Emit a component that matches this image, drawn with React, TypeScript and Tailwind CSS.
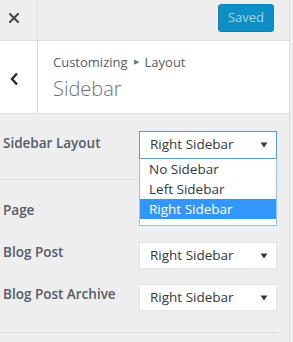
import { useState } from "react";

const OPTIONS = ["No Sidebar", "Left Sidebar", "Right Sidebar"];

const ROWS = [
  { label: "Page", value: "Right Sidebar" },
  { label: "Blog Post", value: "Right Sidebar" },
  { label: "Blog Post Archive", value: "Right Sidebar" },
];

function Caret() {
  return (
    <svg width="8" height="6" viewBox="0 0 8 6" aria-hidden="true" className="shrink-0">
      <path d="M0.5 0.5h7L4 5.5z" fill="#32373c" />
    </svg>
  );
}

function SelectBox({ value, focused }: { value: string; focused?: boolean }) {
  return (
    <div
      className={
        "flex items-center justify-between w-[138px] pl-[10px] pr-[8px] bg-white text-[13.5px] text-[#32373c] " +
        (focused ? "h-[28px] border border-[#5b9dd9]" : "h-[27px] border border-[#e2e4e7]")
      }
    >
      <span className="leading-none">{value}</span>
      <Caret />
    </div>
  );
}

export default function App() {
  const [value] = useState("Right Sidebar");

  return (
    <div
      className="relative w-[293px] h-[342px] overflow-hidden bg-[#eeeeee]"
      style={{ fontFamily: '"Open Sans", "Noto Sans", sans-serif' }}
    >
      <div className="w-[290px] h-full border-r border-[#e0e0e0]">
        {/* top bar */}
        <div className="flex h-[41px] border-b border-[#dddddd]">
          <button
            type="button"
            className="w-[38px] h-[40px] border-r border-[#dddddd] flex items-start justify-start pl-[9px] pt-[13px]"
          >
            <svg width="10" height="10" viewBox="0 0 10 10" aria-hidden="true">
              <path d="M1 1l8 8M9 1l-8 8" stroke="#444" strokeWidth="2" strokeLinecap="square" />
            </svg>
          </button>
          <div className="flex-1 flex justify-end pr-[15px] pt-[4px]">
            <button
              type="button"
              className="w-[56px] h-[28px] rounded-[3px] bg-[#0e8ec4] border border-[#0a83b6] text-[13px] text-[#a3d7ee]"
            >
              Saved
            </button>
          </div>
        </div>

        {/* section title */}
        <div className="flex h-[73px] bg-white border-b border-[#dddddd]">
          <button
            type="button"
            className="w-[38px] h-full border-r border-[#dddddd] flex items-center pl-[10px] pt-[3px]"
          >
            <svg width="9" height="14" viewBox="0 0 9 14" aria-hidden="true">
              <path d="M7 1.5L2 7l5 5.5" fill="none" stroke="#23282d" strokeWidth="2.4" />
            </svg>
          </button>
          <div className="pl-[15px] pt-[12px]">
            <div className="flex items-center gap-[6px] text-[13px] text-[#555d66] leading-[18px]">
              <span>Customizing</span>
              <span className="text-[7px] text-[#72777c]">▶</span>
              <span>Layout</span>
            </div>
            <div className="mt-[5px] text-[20px] font-light text-[#6c7278] leading-[26px]">
              Sidebar
            </div>
          </div>
        </div>

        {/* controls */}
        <div className="pt-[17px]">
          <div className="relative flex items-start">
            <div className="w-[139px] pl-[3px] pt-[2px] text-[13.5px] font-semibold text-[#555d66] leading-[20px]">
              Sidebar Layout
            </div>
            <SelectBox value={value} focused />
            <div className="absolute left-[139px] top-[28px] z-10 w-[138px] bg-white border border-t-0 border-[#9ac3ea] pb-[6px] text-[13.5px] text-[#32373c]">
              {OPTIONS.map((opt) => (
                <div
                  key={opt}
                  className={
                    "h-[20px] pl-[9px] flex items-center " +
                    (opt === value ? "bg-[#3297fd] text-white" : "")
                  }
                >
                  {opt}
                </div>
              ))}
            </div>
          </div>

          <div className="mt-[20px] mr-[10px] border-t border-[#dcdcdc]" />

          <div className="flex flex-col gap-[15px] pt-[20px]">
            {ROWS.map((row, i) => (
              <div key={row.label} className="flex items-start">
                <div className="w-[139px] pl-[3px] text-[13.5px] font-semibold text-[#555d66] leading-[20px]">
                  {row.label}
                </div>
                {i === 0 ? (
                  <div className="w-[138px] h-[27px]" />
                ) : (
                  <SelectBox value={row.value} />
                )}
              </div>
            ))}
          </div>

          <div className="mt-[21px] mr-[10px] border-t border-[#dcdcdc]" />
        </div>
      </div>
    </div>
  );
}
